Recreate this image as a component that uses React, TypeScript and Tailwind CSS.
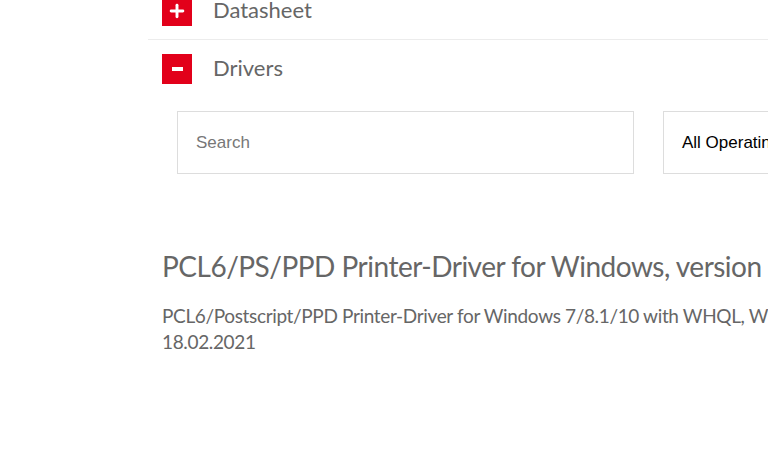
import { Plus } from 'lucide-react';

export default function App() {
  const font = { fontFamily: 'Lato, "Open Sans", sans-serif' };

  return (
    <main className="w-[768px] h-[463px] overflow-hidden bg-white">
      <div className="pl-[148px] -mt-[18px] w-[1100px]" style={font}>
        <div className="flex items-center gap-[21px] px-[14px] pt-[14px] pb-[13px] border-b border-[#ececec]">
          <div className="w-[30px] h-[30px] bg-[#e2001a] flex items-center justify-center">
            <Plus className="w-[20px] h-[20px] text-white" strokeWidth={3.5} />
          </div>
          <span className="text-[22px] text-[#666666] leading-none -mt-[2px]">Datasheet</span>
        </div>

        <div className="flex items-center gap-[21px] px-[14px] pt-[14px]">
          <div className="w-[30px] h-[30px] bg-[#e2001a] flex items-center justify-center">
            <div className="w-[11px] h-[4px] bg-white" />
          </div>
          <span className="text-[22px] text-[#666666] leading-none -mt-[2px]">Drivers</span>
        </div>

        <div className="flex gap-[29px] pl-[29px] mt-[27px] font-['Liberation_Sans',Arial,sans-serif]">
          <input
            placeholder="Search"
            className="w-[457px] h-[63px] border border-[#dddddd] px-[18px] text-[17px] placeholder:text-[#777777] outline-none"
          />
          <div className="w-[300px] h-[63px] border border-[#dddddd] px-[18px] flex items-center text-[17px] text-black">
            All Operating Systems
          </div>
        </div>

        <div className="px-[14px] mt-[72px] text-[#666666]">
          <h2 className="text-[28px] leading-[40px] tracking-[-0.5px] whitespace-nowrap">
            PCL6/PS/PPD Printer-Driver for Windows, version 1.13
          </h2>
          <p className="mt-[17px] text-[19px] leading-[26px] tracking-[-0.35px] whitespace-nowrap">
            PCL6/Postscript/PPD Printer-Driver for Windows 7/8.1/10 with WHQL, Windows Server 2012/2016/2019
            <br />
            18.02.2021
          </p>
        </div>
      </div>
    </main>
  );
}
